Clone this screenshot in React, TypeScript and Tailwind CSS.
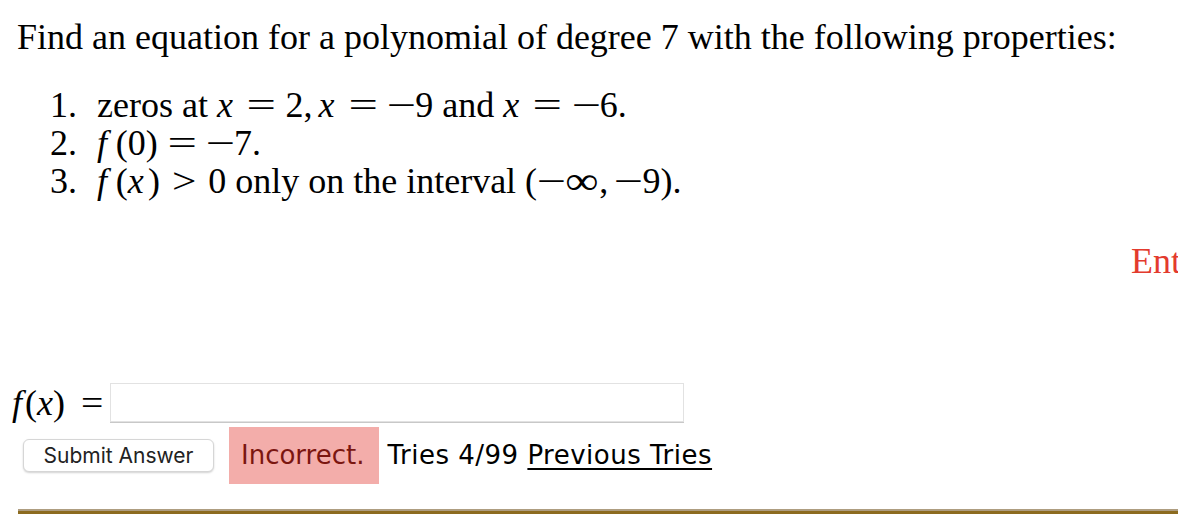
import React from 'react';

const serif = "font-['Liberation_Serif','Times_New_Roman',serif]";

// math pieces, sized like TeX glyphs (operators are wider than in Times)
function Var({ children }: { children: React.ReactNode }) {
  return <span className="italic pr-[0.12em]">{children}</span>;
}

function F() {
  return <span className="italic pr-[0.24em]">f</span>;
}

function Wide({ children, scale = 'x' }: { children: React.ReactNode; scale?: 'x' | 'gt' }) {
  return (
    <span className="inline-block w-[0.78em] text-center">
      <span className={scale === 'gt' ? 'inline-block scale-x-[1.2]' : 'inline-block scale-x-[1.45]'}>{children}</span>
    </span>
  );
}

function Rel({ children, gt }: { children: React.ReactNode; gt?: boolean }) {
  return (
    <span className="mx-[0.28em]">
      <Wide scale={gt ? 'gt' : 'x'}>{children}</Wide>
    </span>
  );
}

function Item({ n, children }: { n: string; children: React.ReactNode }) {
  return (
    <div className="flex">
      <span className="w-[47px] shrink-0">{n}</span>
      <span>{children}</span>
    </div>
  );
}

export default function App() {
  return (
    <div className={`w-[1178px] h-[514px] overflow-hidden bg-white text-black ${serif}`}>
      <div className="pl-[17px] pt-[17px]">
        {/* Question */}
        <p className="text-[36px] leading-[41px] whitespace-nowrap">
          Find an equation for a polynomial of degree 7 with the following properties:
        </p>

        <div className="mt-[28px] ml-[33px] text-[36px] leading-[38px] whitespace-nowrap">
          <Item n="1.">
            zeros at <Var>x</Var><Rel>=</Rel>2,<span className="ml-[0.17em]" /><Var>x</Var><Rel>=</Rel><Wide>−</Wide>9 and <Var>x</Var><Rel>=</Rel><Wide>−</Wide>6.
          </Item>
          <Item n="2.">
            <F />(0)<Rel>=</Rel><Wide>−</Wide>7.
          </Item>
          <Item n="3.">
            <F />(<Var>x</Var>)<Rel gt>&gt;</Rel>0 only on the interval (<Wide>−</Wide>
            <span className="inline-block w-[0.95em] text-center">
              <span className="inline-block scale-x-[1.3] scale-y-[1.1]">∞</span>
            </span>
            ,<span className="ml-[0.17em]" /><Wide>−</Wide>9).
          </Item>
        </div>

        {/* hint text running off the right edge, clipped as in the page */}
        <div className="mt-[41px] pl-[1114px] text-[36px] leading-[41px] text-[#e33b2e] whitespace-nowrap">
          Enter your answer below.
        </div>

        {/* Answer row */}
        <div className="mt-[101px] -ml-[5px] flex items-center h-[39px]">
          <span className="text-[36px] leading-none whitespace-nowrap">
            <span className="italic pr-[0.08em]">f</span>(<span className="italic">x</span>)
            <span className="ml-[17px] inline-block scale-x-[1.1]">=</span>
          </span>
          <input
            type="text"
            className="ml-[8px] w-[574px] h-[39px] bg-white border border-[#e2e2e2] shadow-[0_1px_0_#c8c8c8] outline-none"
          />
        </div>

        <div className="mt-[5px] ml-[6px] flex items-center h-[57px]">
          <button className="w-[191px] h-[33px] rounded-[6px] border border-[#d6d6d6] bg-white shadow-[0_1px_2px_rgba(0,0,0,0.18)] font-['Inter',sans-serif] text-[21px] text-[#222]">
            Submit Answer
          </button>
          <div className="ml-[15px] flex items-center h-[57px] pl-[12px] pr-[15px] bg-[#f3adaa] font-['DejaVu_Sans',sans-serif] text-[26px] text-[#7b1610]">
            Incorrect.
          </div>
          <div className="ml-[8px] font-['DejaVu_Sans',sans-serif] text-[26px] tracking-[0.5px] whitespace-nowrap">
            Tries 4/99 <span className="underline underline-offset-[4px] decoration-[2px]">Previous Tries</span>
          </div>
        </div>

        {/* divider */}
        <div className="mt-[25px] ml-[1px] border-t-2 border-t-[#ae9d80] border-b-[3px] border-b-[#8c6b1f]" />
      </div>
    </div>
  );
}
